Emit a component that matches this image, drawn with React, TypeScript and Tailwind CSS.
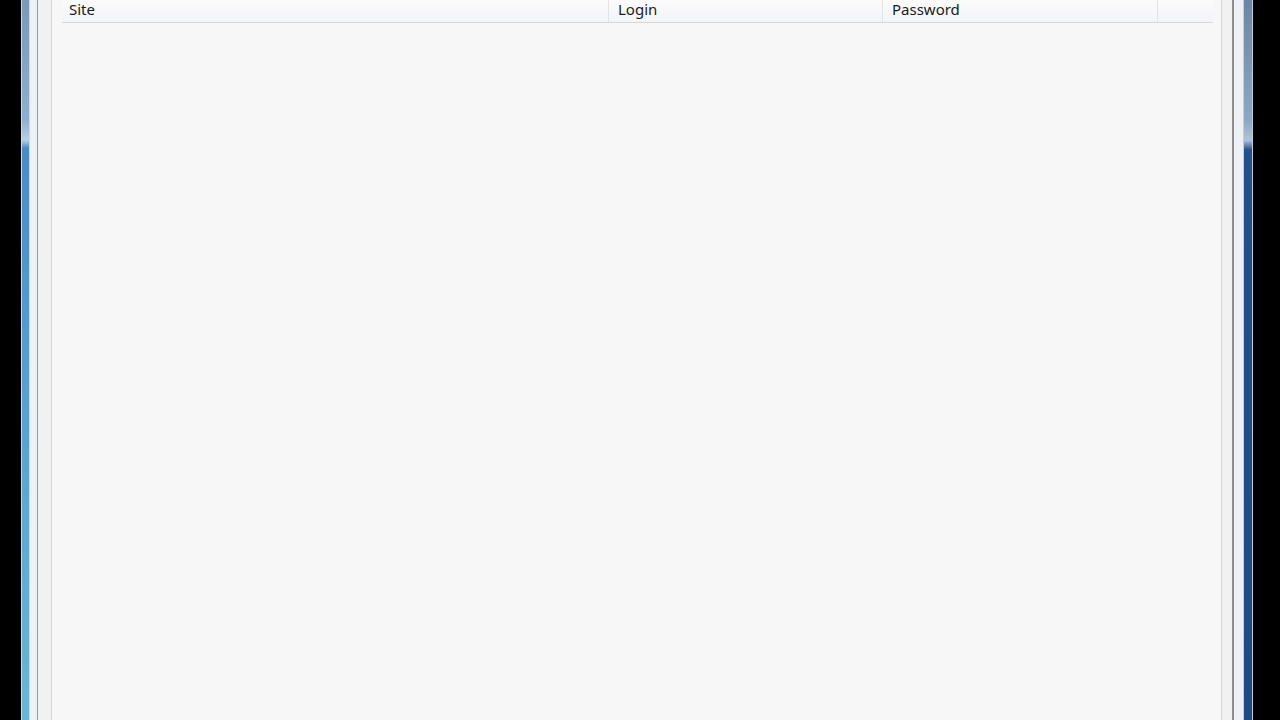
import React from 'react';

const columns = [
	{ label: 'Site', width: 'w-[547px]', pad: 'pl-[7px]' },
	{ label: 'Login', width: 'w-[274px]', pad: 'pl-[9px]' },
	{ label: 'Password', width: 'w-[275px]', pad: 'pl-[9px]' },
];

const App: React.FC = () => {
	return (
		<div className="flex h-[720px] w-[1280px] overflow-hidden bg-black font-['Noto_Sans',sans-serif]">
			{/* Left window frame */}
			<div className="w-[21px] shrink-0 bg-black"></div>
			<div className="w-[9px] shrink-0 border-x border-[#c8d8e8] bg-[linear-gradient(to_bottom,#7b98b8_0px,#8fb0d0_120px,#b8d0e6_140px,#4c8cc4_148px,#5aa0d0_400px,#6ab4d4_700px)]"></div>
			<div className="w-[7px] shrink-0 bg-[#eef1f4]"></div>
			<div className="w-px shrink-0 bg-[#9a9a9a]"></div>
			<div className="w-[13px] shrink-0 bg-[#f1f1f1]"></div>
			<div className="w-px shrink-0 bg-[#d6d6d6]"></div>

			{/* Client area */}
			<div className="w-[1169px] shrink-0 bg-[#f7f7f7] pl-[10px] pr-[8px]">
				<div className="flex h-[23px] border-b border-[#d8d8d8] bg-[linear-gradient(to_bottom,#fbfbfc,#f3f4f6)]">
					{columns.map(col => (
						<div
							key={col.label}
							className={`${col.width} ${col.pad} shrink-0 border-r border-[#e2e3e6] text-[15px] leading-[18px] text-[#1b1b22]`}
						>
							{col.label}
						</div>
					))}
					<div className="flex-1"></div>
				</div>
			</div>

			{/* Right window frame */}
			<div className="w-px shrink-0 bg-[#d6d6d6]"></div>
			<div className="w-[10px] shrink-0 bg-[#f1f1f1]"></div>
			<div className="w-[2px] shrink-0 bg-[#8e8e8e]"></div>
			<div className="w-[9px] shrink-0 bg-[#eef1f4]"></div>
			<div className="w-[10px] shrink-0 border-x border-[#c0cee0] bg-[linear-gradient(to_bottom,#6b86a4_0px,#8ea6c0_120px,#b0c4d8_140px,#24508a_150px,#1e4a84_720px)]"></div>
			<div className="w-[26px] shrink-0 bg-black"></div>
		</div>
	);
};

export default App;
